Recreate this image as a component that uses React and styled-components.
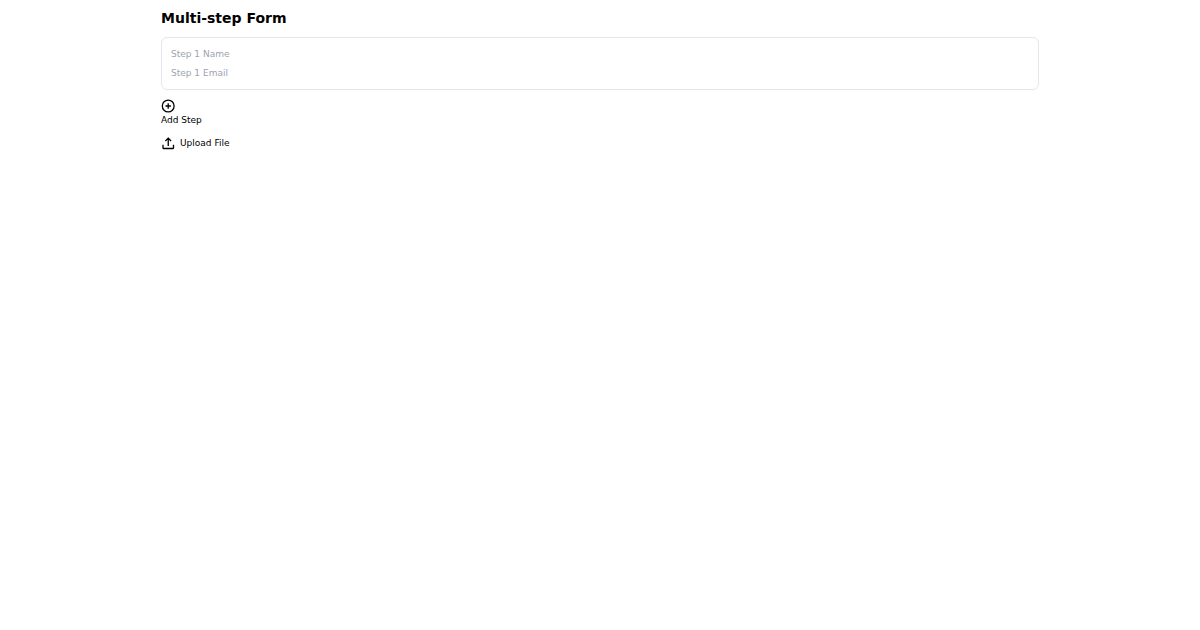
import React, { useState } from 'react';
import styled, { createGlobalStyle } from 'styled-components';

const GlobalStyle = createGlobalStyle`
  *, *::before, *::after { box-sizing: border-box; }
  body {
    margin: 0;
    background: #ffffff;
    color: #000000;
    font-family: "DejaVu Sans", sans-serif;
    font-size: 9px;
    line-height: 14px;
  }
`;

const Page = styled.main`
  max-width: 898px;
  margin: 0 auto;
  padding: 10px;
`;

const Title = styled.h1`
  margin: 0 0 10px;
  font-size: 14px;
  line-height: 17px;
  font-weight: 700;
`;

const StepCard = styled.fieldset`
  display: flex;
  flex-direction: column;
  gap: 5px;
  min-width: 0;
  margin: 0 0 9px;
  padding: 9px;
  border: 1px solid #e5e7eb;
  border-radius: 6px;
`;

const Field = styled.input`
  display: block;
  width: 100%;
  height: 14px;
  margin: 0;
  padding: 0;
  border: 0;
  background: transparent;
  color: inherit;
  font: inherit;
  &::placeholder { color: #9ca3af; opacity: 1; }
`;

const ActionButton = styled.button`
  display: flex;
  flex-direction: ${({ $stacked }) => ($stacked ? 'column' : 'row')};
  align-items: ${({ $stacked }) => ($stacked ? 'flex-start' : 'center')};
  gap: ${({ $stacked }) => ($stacked ? '0' : '5px')};
  margin: 0 0 9px;
  padding: 0;
  border: 0;
  background: transparent;
  color: inherit;
  font: inherit;
  cursor: pointer;
`;

const Icon = styled.svg`
  display: block;
  width: 14px;
  height: 14px;
  fill: none;
  stroke: currentColor;
  stroke-width: 1.3;
`;

const PlusCircleIcon = () => (
  <Icon viewBox="0 0 14 14" aria-hidden="true">
    <circle cx="7.2" cy="7" r="5.9" />
    <path d="M7.2 4.3v5.4M4.5 7h5.4" />
  </Icon>
);

const UploadIcon = () => (
  <Icon viewBox="0 0 14 14" aria-hidden="true">
    <path d="M2 8.8v3.3q0 .4.4.4h9.7q.4 0 .4-.4V8.8M7.25 10V2.2M4.4 5l2.85-2.85L10.1 5" />
  </Icon>
);

export default function App() {
  const [steps, setSteps] = useState([1]);
  return (
    <>
      <GlobalStyle />
      <Page>
        <Title>Multi-step Form</Title>
        {steps.map((n) => (
          <StepCard key={n}>
            <Field type="text" aria-label={`Step ${n} Name`} placeholder={`Step ${n} Name`} />
            <Field type="email" aria-label={`Step ${n} Email`} placeholder={`Step ${n} Email`} />
          </StepCard>
        ))}
        <ActionButton type="button" $stacked onClick={() => setSteps([...steps, steps.length + 1])}>
          <PlusCircleIcon />
          Add Step
        </ActionButton>
        <ActionButton type="button">
          <UploadIcon />
          Upload File
        </ActionButton>
      </Page>
    </>
  );
}
